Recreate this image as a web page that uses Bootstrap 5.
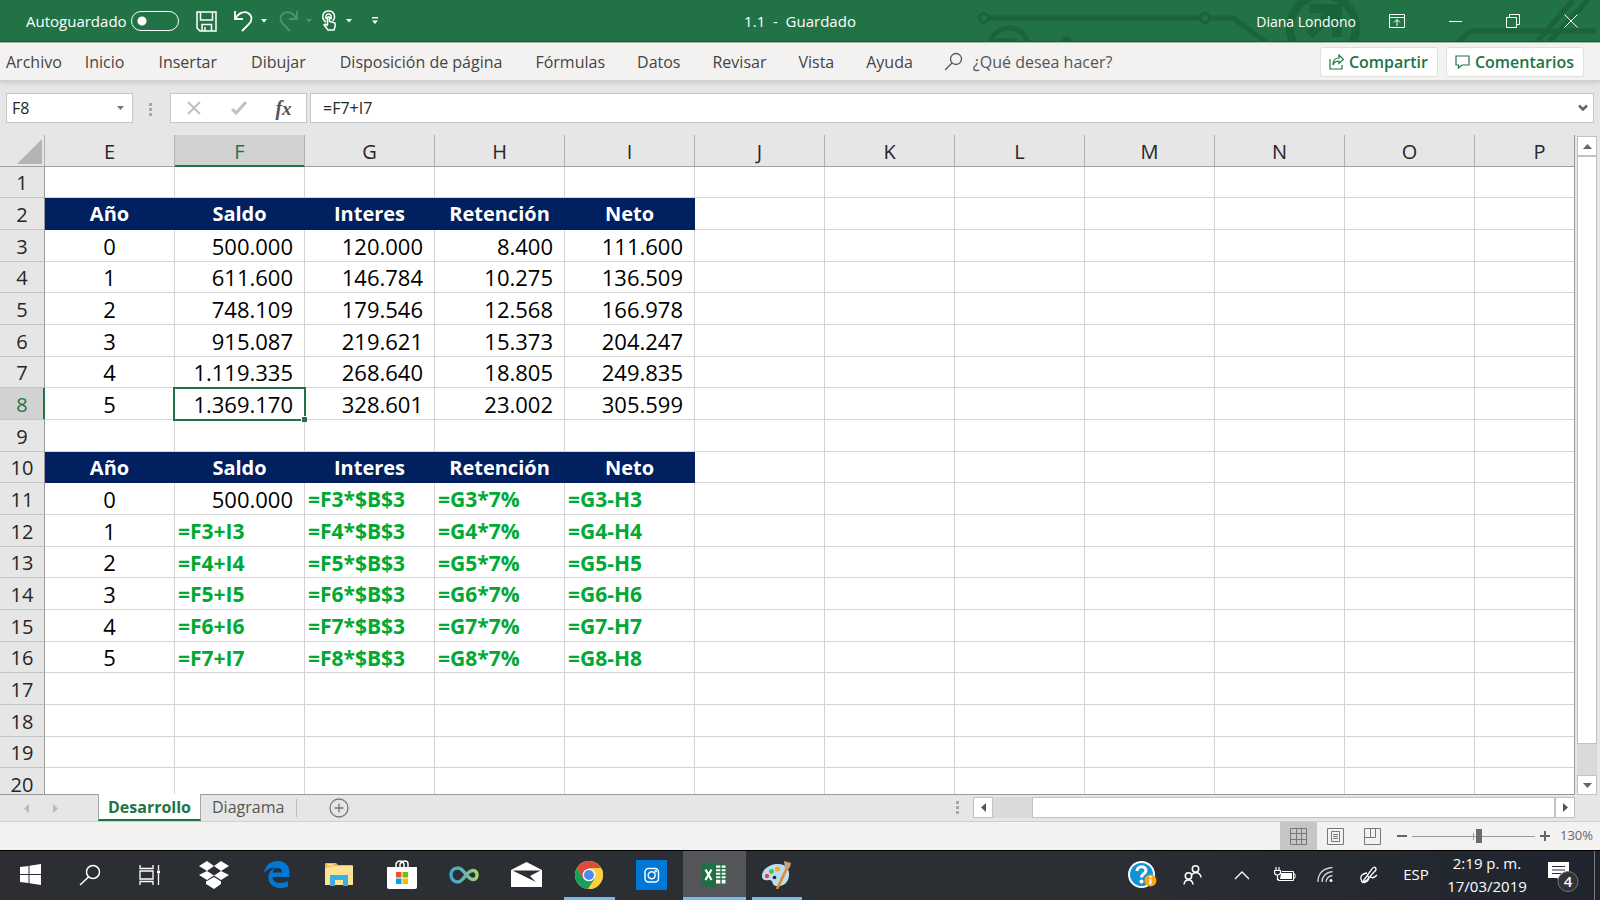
<!DOCTYPE html>
<html lang="es">
<head>
<meta charset="utf-8">
<meta name="viewport" content="width=device-width, initial-scale=1">
<title>1.1 - Guardado</title>
<link href="https://cdn.jsdelivr.net/npm/bootstrap@5.3.0/dist/css/bootstrap.min.css" rel="stylesheet">
<style>
:root { --xl: #217346; --chrome: #e6e6e6; --pale: #f3f2f1; --line: #d4d4d4; }
body { font-family: "Open Sans", "Noto Sans", sans-serif; font-size: 16px; background: var(--chrome); color: #444; }
button { background: none; border: 0; padding: 0; color: inherit; font: inherit; }
svg { display: block; flex: none; }

.titlebar { height: 43px; background: var(--xl); color: #fff; font-size: 15px; border-bottom: 1px solid #9fb9aa; box-shadow: inset 0 -1px #0f6034; }
.side { flex: 1 1 0; min-width: 0; z-index: 1; }
.doc-title { white-space: pre; }
.circuit { top: 0; right: 0; }
.autosave-label { margin-left: 26px; }
.autosave { width: 48px; height: 20px; margin: 0 17px 0 4px; appearance: none; border: 1px solid #fff; border-radius: 10px; background: radial-gradient(circle at 10px 9px, #fff 4px, transparent 5px); }
.user { font-size: 14px; margin-right: 12px; }
.win-btn { width: 58px; height: 40px; }

.ribbon { height: 38px; background: var(--pale); border-bottom: 1px solid #d2d0ce; box-shadow: 0 2px 5px rgba(0,0,0,.12); }
.ribbon .nav-link { padding: 0 17px; color: #444; line-height: 36px; white-space: nowrap; }
.ribbon .nav-link:first-child { padding: 0 6px; }
.ribbon .nav-link:nth-child(n+6) { padding: 0 16px; }
.tellme { width: 200px; border: 0; background: none; color: #444; outline: 0; padding: 0; }
.tellme::placeholder { color: #555; opacity: 1; }
.share { height: 30px; background: #fff; border: 1px solid #e1dfdd; border-radius: 3px; color: var(--xl); font-weight: 600; padding: 0 9px 0 8px; gap: 5px; }

.formula { padding: 12px 6px 0 6px; height: 54px; }
.field { height: 30px; background: #fff; border: 1px solid #c6c6c6; }
.field input { border: 0; outline: 0; padding: 0; color: #262626; font-size: 16px; min-width: 0; background: none; }
.namebox { width: 127px; padding: 0 8px 0 5px; }
.fxbox { width: 137px; margin: 0 3px 0 18px; }
.fxbox button { width: 45px; }
.fx { font: italic 19px/28px "Liberation Serif", serif; color: #555; }
.grip i { display: block; width: 3px; height: 3px; margin: 2px 0; background: #a8a8a8; }
.bar { padding: 0 5px 0 8px; }

.sheet { border-right: 1px solid #999; border-bottom: 1px solid #999; background: #fff; }
.cells { border-collapse: separate; border-spacing: 0; table-layout: fixed; width: 1605px; color: #000; font-size: 22px; line-height: 28px; }
.cells col { width: 130px; }
.cells col:first-child { width: 45px; }
.cells th, .cells td { padding: 0; border-right: 1px solid var(--line); border-bottom: 1px solid var(--line); white-space: nowrap; height: 32px; }
.cells tbody tr:nth-child(3n+1) > * { height: 31px; }
.cells th { font-weight: 400; text-align: center; background: var(--chrome); color: #262626; font-size: 20px; padding-top: 2px; }
.cells thead th { height: 32px; border-right-color: #b1b1b1; border-bottom-color: #a0a0a0; }
.cells tbody th { border-right-color: #999; border-bottom-color: #c4c4c4; }
.cells thead th.on { background: #d2d2d2; color: var(--xl); border-bottom-color: var(--xl); box-shadow: inset 0 -1px var(--xl); }
.cells tbody th.on { background: #d2d2d2; color: var(--xl); border-right-color: var(--xl); box-shadow: inset -1px 0 var(--xl); }
.cells .mid { text-align: center; }
.cells .num { text-align: right; padding-right: 11px; }
.cells .cap { text-align: center; background: #002060; border-color: #002060; color: #fff; font-weight: 700; font-size: 20px; padding-top: 1px; }
.cells .fml { color: #00a933; font-weight: 700; font-size: 21px; padding-left: 3px; padding-top: 1px; }
.picked { position: relative; }
.picked::before { content: ""; position: absolute; inset: -1px -2px -2px -2px; border: 2px solid var(--xl); }
.picked::after { content: ""; position: absolute; right: -3px; bottom: -3px; width: 6px; height: 6px; background: var(--xl); border: 1px solid #fff; border-width: 1px 0 0 1px; }
.corner { border-style: solid; border-width: 0 0 25px 25px; border-color: transparent transparent #b4b4b4; margin: 0 2px 0 auto; width: 0; }

.vbar { width: 25px; padding: 1px 3px 0 2px; }
.sbtn { width: 20px; height: 20px; background: #fff; border: 1px solid #c2c2c2; flex: none; }
.track { background: #dadada; }
.thumb { background: #fff; border: 1px solid #c2c2c2; }

.tabs { height: 27px; border-bottom: 1px solid #cfcfcf; }
.tabs .nav-link { padding: 0; line-height: 24px; color: #555; height: 26px; }
.tabs .nav-link.active { width: 103px; background: #fff; color: var(--xl); font-weight: 700; border: 1px solid #a6a6a6; border-top: 0; border-bottom: 2px solid var(--xl); margin-top: -1px; height: 27px; line-height: 26px; }
.steps { width: 98px; padding-left: 24px; gap: 24px; }
.tabs .other { padding: 0 8px; margin-left: 3px; }
.tabs .grip { margin-right: 14px; }
.hbar { width: 602px; margin-right: 25px; height: 21px; margin-top: 2px; }

.status { height: 28px; background: var(--pale); color: #666; font-size: 13px; }
.status .view { width: 37px; height: 28px; }
.status .view.on { background: #c8c6c4; }
.zoom-out { margin-left: 6px; }
.zoomer { width: 123px; height: 16px; appearance: none; margin: 0 5px; background: linear-gradient(#999,#999) 0 50%/100% 1px no-repeat, linear-gradient(#999,#999) 50% 50%/1px 7px no-repeat; }
.zoomer::-webkit-slider-thumb { appearance: none; width: 6px; height: 14px; background: #6b6b6b; }
.percent { width: 43px; margin-right: 7px; }

.taskbar { height: 50px; background: linear-gradient(90deg, #2c2e33, #2b2e33 70%, #1f242d); border-top: 1px solid #000; color: #fff; font-size: 15px; }
.taskbar button { height: 49px; position: relative; padding-bottom: 2px; }
.sys { width: 60px; }
.apps { width: 625px; margin-left: 3px; }
.apps button { flex: 1 1 0; }
.apps .open::after { content: ""; position: absolute; left: 6px; right: 6px; bottom: 0; height: 3px; background: #76b9ed; }
.apps .front { background: #55565a; }
.apps .front::after { left: 0; right: 0; }
.clock { width: 92px; line-height: 23px; padding-top: 1px; }
.w36 { width: 36px; } .w44 { width: 44px; } .w50 { width: 50px; }
.taskbar .notes { padding: 2px 0 0 9px; }
.peek { width: 6px; height: 49px; border-left: 1px solid #777b82; margin-left: 11px; }
</style>
</head>
<body class="d-flex flex-column vh-100 overflow-hidden">

<header class="titlebar d-flex align-items-center position-relative flex-shrink-0">
  <svg class="circuit position-absolute" width="622" height="41" viewBox="978 0 622 41" fill="none" stroke="#1b6339" stroke-width="5">
    <circle cx="984" cy="18" r="4.500" stroke-width="3"/><path d="M988 18H1200"/>
    <circle cx="1205" cy="18" r="4.500" stroke-width="3"/><path d="M1209 18H1233L1266 42"/>
    <circle cx="1009" cy="47" r="19"/><path d="M996 40H1018" stroke-width="3"/><circle cx="1066" cy="42" r="6" fill="#1b6339" stroke="none"/>
    <circle cx="1323" cy="28" r="33" stroke-width="8"/>
    <path d="M1309 4H1342V37H1332V19L1313 38L1306 32L1325 13H1309Z" fill="#1b6339" stroke="none"/>
    <path d="M1458 42L1470 31H1596M1537 42L1573 0M1549 42L1588 0"/>
  </svg>
  <div class="side d-flex align-items-center">
    <label class="autosave-label" for="autosave">Autoguardado</label>
    <input class="autosave" type="checkbox" role="switch" id="autosave">
    <button aria-label="Guardar"><svg width="21" height="21" viewBox="0 0 21 21" fill="none" stroke="#fff" stroke-width="1.500"><path d="M1 1H20V20H4L1 17ZM4.500 1V9H16.500V1M6 20V13.500H15.500V20M9 20V16"/></svg></button>
    <button class="ms-3" aria-label="Deshacer"><svg width="36" height="22" viewBox="0 0 36 22" fill="none" stroke="#fff" stroke-width="1.800"><path d="M2 1V9H10M2 9C6 2 12 1 15 3C20 6 19 11 16 14L9 21"/><path d="M28 9H34L31 12.500Z" fill="#fff" stroke="none"/></svg></button>
    <button class="ms-2" aria-label="Rehacer" disabled><svg width="36" height="22" viewBox="0 0 36 22" fill="none" stroke="#4f9370" stroke-width="1.800"><path d="M20 1V9H12M20 9C16 2 10 1 7 3C2 6 3 11 6 14L13 21"/><path d="M29 9H35L32 12.500Z" fill="#4f9370" stroke="none"/></svg></button>
    <button class="ms-2" aria-label="Modo mouse o táctil"><svg width="34" height="22" viewBox="0 0 34 22" fill="none" stroke="#fff" stroke-width="1.500"><path d="M5 12C0 9 1 1 7.500 1S15 8 11.500 11M5.500 9C4 7 5 4 7.500 4S11 7 9.500 9M6.500 15V7.500Q7.500 6 8.500 7.500V11.500L14 13Q15 16 13 20H7L3 15Q4 13 6.500 16"/><path d="M25 9H31L28 12.500Z" fill="#fff" stroke="none"/></svg></button>
    <button class="ms-3" aria-label="Personalizar"><svg width="8" height="10" viewBox="0 0 8 10" fill="#fff"><path d="M1 1H7V2.500H1ZM1 4.500H7L4 8Z"/></svg></button>
  </div>
  <div class="doc-title">1.1  -  Guardado</div>
  <div class="side d-flex align-items-center justify-content-end">
    <span class="user">Diana Londono</span>
    <button class="win-btn d-flex align-items-center justify-content-center" aria-label="Opciones de cinta"><svg width="16" height="14" viewBox="0 0 16 14" fill="none" stroke="#fff"><path d="M.5.5H15.500V13.500H.5ZM.5 3.500H15.500M8 12V5.500M5 8.500L8 5.500L11 8.500"/></svg></button>
    <button class="win-btn d-flex align-items-center justify-content-center" aria-label="Minimizar"><svg width="13" height="3"><path d="M0 1.500H13" stroke="#fff"/></svg></button>
    <button class="win-btn d-flex align-items-center justify-content-center" aria-label="Restaurar"><svg width="14" height="14" viewBox="0 0 14 14" fill="none" stroke="#fff"><path d="M.5 3.500H10.500V13.500H.5ZM3.500 3.500V.5H13.500V10.500H10.500"/></svg></button>
    <button class="win-btn d-flex align-items-center justify-content-center" aria-label="Cerrar"><svg width="14" height="14" viewBox="0 0 14 14"><path d="M.5.5L13.500 13.500M13.500.5L.5 13.500" stroke="#fff"/></svg></button>
  </div>
</header>

<nav class="ribbon d-flex align-items-center flex-shrink-0">
  <a class="nav-link" href="#">Archivo</a><a class="nav-link" href="#">Inicio</a><a class="nav-link" href="#">Insertar</a><a class="nav-link" href="#">Dibujar</a><a class="nav-link" href="#">Disposición de página</a><a class="nav-link" href="#">Fórmulas</a><a class="nav-link" href="#">Datos</a><a class="nav-link" href="#">Revisar</a><a class="nav-link" href="#">Vista</a><a class="nav-link" href="#">Ayuda</a>
  <label class="d-flex align-items-center ms-3" for="tellme" aria-label="Buscar"><svg class="me-2" width="20" height="20" viewBox="0 0 20 20" fill="none" stroke="#555" stroke-width="1.300"><circle cx="11" cy="7" r="5.500"/><path d="M7 11L0 18"/></svg></label>
  <input class="tellme" id="tellme" type="text" placeholder="¿Qué desea hacer?">
  <button class="share d-flex align-items-center ms-auto"><svg width="15" height="16" viewBox="0 0 15 16" fill="none" stroke="#217346" stroke-width="1.200"><path d="M1 5V15H13V11M4 11C4 6 6 4 10 4V1L14.500 5.500L10 9.500V7C7 7 5 8 4 11Z"/></svg>Compartir</button>
  <button class="share d-flex align-items-center ms-2 me-3"><svg width="15" height="14" viewBox="0 0 15 14" fill="none" stroke="#217346" stroke-width="1.200"><path d="M1 1H14V10H7L3.500 13V10H1Z"/></svg>Comentarios</button>
</nav>

<section class="formula d-flex flex-shrink-0">
  <div class="field namebox d-flex align-items-center"><input class="flex-grow-1" aria-label="Cuadro de nombres" value="F8"><svg width="7" height="4"><path d="M0 0H7L3.500 4Z" fill="#777"/></svg></div>
  <div class="grip pt-1 mt-1 ms-3"><i></i><i></i><i></i></div>
  <div class="field fxbox d-flex">
    <button class="d-flex align-items-center justify-content-center" aria-label="Cancelar"><svg width="14" height="14"><path d="M1 1L13 13M13 1L1 13" stroke="#c0c0c0" stroke-width="2"/></svg></button>
    <button class="d-flex align-items-center justify-content-center" aria-label="Introducir"><svg width="16" height="14"><path d="M1 8L5 12L15 1" stroke="#c0c0c0" stroke-width="3" fill="none"/></svg></button>
    <button class="fx" aria-label="Insertar función"><b class="fs-5">f</b><b>x</b></button>
  </div>
  <div class="field bar flex-grow-1 d-flex align-items-center"><input class="flex-grow-1 ms-1" aria-label="Barra de fórmulas" value="=F7+I7"><svg width="10" height="8"><path d="M1 1.500L5 5.500L9 1.500" stroke="#666" stroke-width="2.500" fill="none"/></svg></div>
</section>

<main class="d-flex flex-grow-1 overflow-hidden">
  <div class="sheet flex-grow-1 overflow-hidden">
    <table class="cells"><colgroup id="cols"></colgroup><thead><tr id="heads"></tr></thead><tbody id="rows"></tbody></table>
  </div>
  <div class="vbar d-flex flex-column">
    <button class="sbtn d-flex align-items-center justify-content-center" aria-label="Subir"><svg width="9" height="5"><path d="M0 5H9L4.500 0Z" fill="#666"/></svg></button>
    <div class="track flex-grow-1 d-flex flex-column"><div class="thumb" style="height:95%"></div></div>
    <button class="sbtn d-flex align-items-center justify-content-center" aria-label="Bajar"><svg width="9" height="5"><path d="M0 0H9L4.500 5Z" fill="#666"/></svg></button>
  </div>
</main>

<nav class="tabs d-flex flex-shrink-0">
  <div class="steps d-flex align-items-center"><svg width="5" height="9"><path d="M5 0V9L0 4.500Z" fill="#bbb"/></svg><svg width="5" height="9"><path d="M0 0V9L5 4.500Z" fill="#bbb"/></svg></div>
  <a class="nav-link active text-center" href="#">Desarrollo</a>
  <a class="nav-link other" href="#">Diagrama</a>
  <div class="vr my-1 ms-1"></div>
  <button class="ms-4 ps-2" aria-label="Hoja nueva"><svg width="20" height="20" viewBox="0 0 20 20" fill="none" stroke="#777" stroke-width="1.300"><circle cx="10" cy="10" r="9"/><path d="M10 5.500V14.500M5.500 10H14.500"/></svg></button>
  <div class="grip ms-auto pt-1"><i></i><i></i><i></i></div>
  <div class="hbar d-flex">
    <button class="sbtn h-100 d-flex align-items-center justify-content-center" aria-label="Izquierda"><svg width="5" height="9"><path d="M5 0V9L0 4.500Z" fill="#555"/></svg></button>
    <div class="track flex-grow-1 d-flex justify-content-end"><div class="thumb" style="width:93%"></div></div>
    <button class="sbtn h-100 d-flex align-items-center justify-content-center" aria-label="Derecha"><svg width="5" height="9"><path d="M0 0V9L5 4.500Z" fill="#555"/></svg></button>
  </div>
</nav>

<footer class="status d-flex align-items-center justify-content-end flex-shrink-0">
  <button class="view on d-flex align-items-center justify-content-center" aria-label="Normal"><svg width="17" height="17" viewBox="0 0 17 17" fill="none" stroke="#777"><path d="M.5.5H16.500V16.500H.5ZM6.500.5V16.500M11.500.5V16.500M.5 5.500H16.500M.5 11.500H16.500"/></svg></button>
  <button class="view d-flex align-items-center justify-content-center" aria-label="Diseño de página"><svg width="17" height="17" viewBox="0 0 17 17" fill="none" stroke="#777"><path d="M.5.5H16.500V16.500H.5ZM4.500 3.500H12.500V13.500H4.500ZM6 6.500H11M6 8.500H11M6 10.500H11"/></svg></button>
  <button class="view d-flex align-items-center justify-content-center" aria-label="Salto de página"><svg width="17" height="17" viewBox="0 0 17 17" fill="none" stroke="#777"><path d="M.5.5H16.500V16.500H.5ZM.5 9.500H11.500V.5M6.500.5V9.500"/></svg></button>
  <button class="zoom-out" aria-label="Alejar"><svg width="10" height="10"><path d="M0 5H10" stroke="#666" stroke-width="2"/></svg></button>
  <input class="zoomer" type="range" min="0" max="100" value="55" aria-label="Zoom">
  <button aria-label="Acercar"><svg width="10" height="10"><path d="M0 5H10M5 0V10" stroke="#666" stroke-width="2"/></svg></button>
  <span class="percent text-end">130%</span>
</footer>

<footer class="taskbar d-flex flex-shrink-0">
  <button class="sys d-flex align-items-center justify-content-center" aria-label="Inicio"><svg width="21" height="21" viewBox="0 0 21 21" fill="#fff"><path d="M0 3L8.500 2V10H0ZM9.500 1.800L21 0V10H9.500ZM0 11H8.500V19L0 18ZM9.500 11H21V21L9.500 19.200Z"/></svg></button>
  <button class="sys d-flex align-items-center justify-content-center" aria-label="Buscar"><svg width="22" height="22" viewBox="0 0 22 22" fill="none" stroke="#fff" stroke-width="1.500"><circle cx="14" cy="8" r="6.500"/><path d="M9.500 13L1 21"/></svg></button>
  <button class="sys d-flex align-items-center justify-content-center" aria-label="Vista de tareas"><svg width="22" height="20" viewBox="0 0 22 20" fill="none" stroke="#fff" stroke-width="1.300"><path d="M1 0V3.500H14V0M1 6H14V14H1ZM1 20V16.500H14V20M19.500 0V5M19.500 9V20"/><path d="M18 5.500H21V8.500H18Z" fill="#fff" stroke="none"/></svg></button>
  <div class="apps d-flex">
    <button class="d-flex align-items-center justify-content-center" aria-label="Dropbox"><svg width="30" height="28" viewBox="0 0 30 28" fill="#fff"><path d="M8 0L15 5L8 10L0 5ZM22 0L30 5L22 10L15 5ZM0 14L8 10L15 14.500L8 19ZM22 10L30 14L22 19L15 14.500ZM15 16L22 20.500V23L15 28L7 23V20.500Z"/></svg></button>
    <button class="d-flex align-items-center justify-content-center" aria-label="Edge"><svg width="26" height="27" viewBox="0 0 26 27"><path d="M0 12C1 4 7 0 14 0C22 0 26 6 25.500 12V16H8.500C9 21 13 22.500 17 22C20 22 22 21 24 20V25.500C20 27.500 15 27.500 11 26C4 23 2.500 15 7 9.500C8 8.500 10 7 12 6.500C7 6 3 8 0 12ZM8.800 11.500H18C18 8.500 16.500 7 13.500 7C10.500 7 9 9 8.800 11.500Z" fill="#0078d7"/></svg></button>
    <button class="d-flex align-items-center justify-content-center" aria-label="Explorador"><svg width="28" height="23" viewBox="0 0 28 23"><path d="M0 1Q0 0 1 0H11L13 2H27Q28 2 28 3V22H0Z" fill="#e8b84b"/><path d="M0 5L10 3H28V22H0Z" fill="#fde293"/><path d="M5 23V12H23V23H18V17H10V23Z" fill="#35b0e4"/><path d="M2 2H8" stroke="#fff"/></svg></button>
    <button class="d-flex align-items-center justify-content-center" aria-label="Store"><svg width="30" height="29" viewBox="0 0 30 29"><path d="M9 7V4Q10 1 13 1T17 4V7M13 7V4Q15 1 18 1T21 4V7" fill="none" stroke="#fff" stroke-width="1.500"/><path d="M0 7H30V27Q30 29 28 29H2Q0 29 0 27Z" fill="#fff"/><path d="M9 12H14.500V17.500H9Z" fill="#f25022"/><path d="M15.500 12H21V17.500H15.500Z" fill="#7fba00"/><path d="M9 18.500H14.500V24H9Z" fill="#00a4ef"/><path d="M15.500 18.500H21V24H15.500Z" fill="#ffb900"/></svg></button>
    <button class="d-flex align-items-center justify-content-center" aria-label="Infinito"><svg width="30" height="18" viewBox="0 0 30 18" fill="none" stroke-width="3.400"><defs><linearGradient id="inf"><stop stop-color="#3fa9c9"/><stop offset=".5" stop-color="#62b5ae"/><stop offset="1" stop-color="#a5d66f"/></linearGradient></defs><path d="M9 2C4 2 2 5.500 2 9S4.500 16 9 16C15 16 17 4.500 24 4.500C27 4.500 28 7 28 9S27 13.500 24 13.500C18 13.500 15 2 9 2Z" stroke="url(#inf)"/></svg></button>
    <button class="d-flex align-items-center justify-content-center" aria-label="Correo"><svg width="31" height="25" viewBox="0 0 31 25"><path d="M0 8L15.500 0L31 8V25H0Z" fill="#fff"/><path d="M1.500 8.500H29.500L19 14L25 20L1.500 8.500Z" fill="#2c2e33"/></svg></button>
    <button class="open d-flex align-items-center justify-content-center" aria-label="Chrome"><svg width="28" height="28" viewBox="0 0 28 28"><circle cx="14" cy="14" r="14" fill="#ffcd40"/><path d="M1.900 7A14 14 0 0 1 26.100 7H14L8 17.500Z" fill="#dd4b3e"/><path d="M1.900 7A14 14 0 0 0 13 28L20 17.500H8Z" fill="#16a05d"/><path d="M14 7H26.100A14 14 0 0 1 13 28L20 17.500Z" fill="#ffcd40"/><circle cx="14" cy="14" r="6.300" fill="#fff"/><circle cx="14" cy="14" r="5" fill="#4c8bf5"/></svg></button>
    <button class="d-flex align-items-center justify-content-center" aria-label="Instagram"><svg width="31" height="30" viewBox="0 0 31 30" fill="none" stroke="#fff" stroke-width="1.500"><path d="M0 0H31V30H0Z" fill="#0078d7" stroke="none"/><rect x="9" y="8.500" width="13.500" height="13.500" rx="3.500"/><circle cx="15.700" cy="15.200" r="3.500"/><circle cx="19.700" cy="11.200" r=".5"/></svg></button>
    <button class="open front d-flex align-items-center justify-content-center" aria-label="Excel"><svg width="26" height="26" viewBox="0 0 26 26"><path d="M14 3H25V22H14Z" fill="#fff" stroke="#217346"/><path d="M14 6.500H25M14 10H25M14 13.500H25M14 17H25M20 3V22" stroke="#217346" stroke-width="1.400"/><path d="M0 3L15 0V26L0 23Z" fill="#1d7044"/><path d="M4.500 7.500L10.500 18M10.500 7.500L4.500 18" stroke="#fff" stroke-width="2.200"/></svg></button>
    <button class="open d-flex align-items-center justify-content-center" aria-label="Paint"><svg width="30" height="28" viewBox="0 0 30 28"><path d="M14 3C24 2 28 8 27 15C26 23 20 26 14 25C9 24 12 19 7 19C3 20 0 19 0 15C0 9 6 4 14 3Z" fill="#b9ddf2"/><circle cx="5" cy="15" r="2.200" fill="#e8413c"/><circle cx="9.500" cy="10.500" r="2.400" fill="#57b947"/><circle cx="15.500" cy="8" r="2.500" fill="#f7a823"/><circle cx="12.500" cy="16.500" r="1.800" fill="#223"/><path d="M15 28L25 7" stroke="#e08a2c" stroke-width="2.600"/><path d="M22 0L29 2L28 6L25.500 9L23 7.500Z" fill="#c7a078"/></svg></button>
  </div>
  <button class="w50 ms-auto d-flex align-items-center justify-content-center" aria-label="Ayuda"><svg width="29" height="28" viewBox="0 0 29 28"><circle cx="13.500" cy="13.500" r="13.500" fill="#fff"/><circle cx="13.500" cy="13.500" r="11.500" fill="#0f95d7"/><path d="M9 10C9 4.500 18 4.500 18 9.500C18 13 13.500 12.500 13.500 16.500" fill="none" stroke="#fff" stroke-width="3"/><circle cx="13.500" cy="20.500" r="2" fill="#fff"/><circle cx="22.500" cy="19.500" r="6" fill="#f7a81b"/><path d="M22.500 15V16.800M22.500 18V23.500" stroke="#fff" stroke-width="2"/></svg></button>
  <button class="w50 d-flex align-items-center justify-content-center" aria-label="Contactos"><svg width="19" height="20" viewBox="0 0 19 20" fill="none" stroke="#fff" stroke-width="1.500"><circle cx="12.500" cy="4" r="3.200"/><circle cx="5.500" cy="11" r="3.200"/><path d="M1 19.500Q1.500 15 5.500 15T10 19.500M9 9.500Q11 7.500 13 7.500Q17.500 8 18 12.500"/></svg></button>
  <button class="w50 d-flex align-items-center justify-content-center" aria-label="Iconos ocultos"><svg width="16" height="10"><path d="M1 9L8 2L15 9" stroke="#fff" stroke-width="1.300" fill="none"/></svg></button>
  <button class="w36 d-flex align-items-center justify-content-center" aria-label="Batería"><svg width="22" height="16" viewBox="0 0 22 16" fill="none" stroke="#fff"><path d="M4 12.500V13.500H19.500V4.500H8M19.500 7H21V11H19.500"/><path d="M7 6H18V12H6Z" fill="#fff" stroke="none"/><path d="M2 0V3M5 0V3M.5 3.500H6.500V6Q6 8 3.500 8T.5 6ZM3.500 8V12.500H5" stroke-width="1.200"/></svg></button>
  <button class="w44 d-flex align-items-center justify-content-center" aria-label="Red"><svg width="17" height="17" viewBox="0 0 17 17" fill="none" stroke="#ccc" stroke-width="1.300"><path d="M1 16Q1 3 15.500 1.500M5 16Q5 7 15.500 5.500M9 16Q9.500 10.500 15.500 9.500"/><circle cx="14" cy="14.500" r="1.500" fill="#fff" stroke="none"/></svg></button>
  <button class="w44 d-flex align-items-center justify-content-center" aria-label="Lápiz"><svg width="18" height="18" viewBox="0 0 18 18" fill="none" stroke="#fff" stroke-width="1.300"><path d="M4 14L12 3Q14 0 15.500 2T14 6L7 14L3 16ZM7 7Q0 8 1 13T6 16Q10 14 8 10M10 10Q12 14 17 9"/></svg></button>
  <button class="w50">ESP</button>
  <div class="clock text-center"><span class="d-block">2:19 p. m.</span><span class="d-block">17/03/2019</span></div>
  <button class="notes w50 d-flex align-items-center justify-content-center" aria-label="Notificaciones"><svg width="32" height="31" viewBox="0 0 32 31"><path d="M1 1H22V17H14V21L10 17H1Z" fill="#fff"/><path d="M5 5.500H18M5 9H18M5 12.500H14" stroke="#2b2e33"/><circle cx="21" cy="20.500" r="10" fill="#303338" stroke="#777"/><text x="21" y="26" text-anchor="middle" font-size="15" font-weight="600" fill="#fff">4</text></svg></button>
  <div class="peek"></div>
</footer>

<script>
const letters = [..."EFGHIJKLMNOP"];
const caps = ["Año", "Saldo", "Interes", "Retención", "Neto"];
const data = {
  2: caps, 10: caps,
  3: ["0", "500.000", "120.000", "8.400", "111.600"],
  4: ["1", "611.600", "146.784", "10.275", "136.509"],
  5: ["2", "748.109", "179.546", "12.568", "166.978"],
  6: ["3", "915.087", "219.621", "15.373", "204.247"],
  7: ["4", "1.119.335", "268.640", "18.805", "249.835"],
  8: ["5", "1.369.170", "328.601", "23.002", "305.599"]
};
for (let i = 0; i < 6; i++) {
  const r = 3 + i;
  data[11 + i] = [String(i), i ? `=F${r - 1}+I${r - 1}` : "500.000", `=F${r}*$B$3`, `=G${r}*7%`, `=G${r}-H${r}`];
}
document.getElementById("cols").innerHTML = "<col>".repeat(letters.length + 1);
document.getElementById("heads").innerHTML = '<th aria-label="Seleccionar todo"><div class="corner"></div></th>' +
  letters.map(l => `<th scope="col" class="${l === "F" ? "on" : ""}">${l}</th>`).join("");
let html = "";
for (let r = 1; r <= 20; r++) {
  html += `<tr><th scope="row" class="${r === 8 ? "on" : ""}">${r}</th>`;
  letters.forEach((l, c) => {
    const v = (data[r] || [])[c] || "";
    let cls = !v ? "" : data[r] === caps ? "cap" : v[0] === "=" ? "fml" : c ? "num" : "mid";
    if (r === 8 && l === "F") cls += " picked";
    html += `<td class="${cls}">${v}</td>`;
  });
  html += "</tr>";
}
document.getElementById("rows").innerHTML = html;
</script>
<script src="https://cdn.jsdelivr.net/npm/bootstrap@5.3.0/dist/js/bootstrap.bundle.min.js"></script>
</body>
</html>
